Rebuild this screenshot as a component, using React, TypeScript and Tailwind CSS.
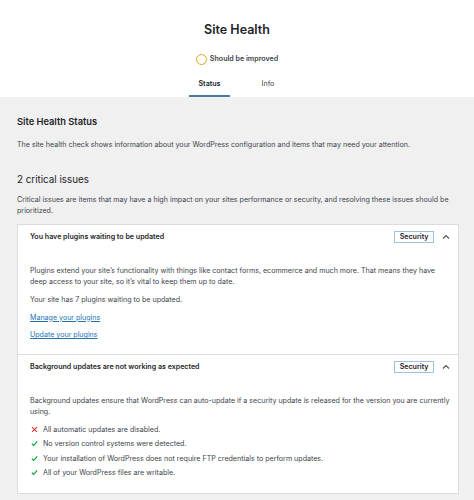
import React from 'react';

const CHECKS = [
  { ok: false, text: 'All automatic updates are disabled.' },
  { ok: true, text: 'No version control systems were detected.' },
  { ok: true, text: 'Your installation of WordPress does not require FTP credentials to perform updates.' },
  { ok: true, text: 'All of your WordPress files are writable.' },
];

function Chevron() {
  return (
    <svg width="8" height="6" viewBox="0 0 8 6" className="shrink-0">
      <path d="M1 4.5 L4 1.5 L7 4.5" fill="none" stroke="#50575e" strokeWidth="1.2" />
    </svg>
  );
}

function IssueHeader({ title }: { title: string }) {
  return (
    <div className="flex items-center h-[25px] pl-[12px] pr-[8px]">
      <span className="flex-1 font-semibold text-[#1d2327]">{title}</span>
      <span className="border border-[#9ec2e6] px-[4.5px] h-[12px] leading-[10px] font-semibold text-[#1d2327] mr-[8px]">
        Security
      </span>
      <Chevron />
    </div>
  );
}

export default function App() {
  return (
    <div className="w-[474px] h-[500px] overflow-hidden bg-[#f0f0f1] text-[7.1px] text-[#3c434a]" style={{ fontFamily: 'Inter, "Noto Sans", sans-serif' }}>
      {/* Header */}
      <div className="bg-white flex flex-col items-center h-[97px]">
        <h1 className="mt-[21px] text-[12.5px] leading-[18px] font-semibold text-[#1d2327]">Site Health</h1>
        <div className="mt-[14.5px] flex items-center gap-[3px]">
          <span className="w-[11px] h-[11px] rounded-full border border-[#dba617]" />
          <span className="font-semibold text-[#3c434a]">Should be improved</span>
        </div>
        <div className="mt-[12.5px] flex h-[20px] ml-[21px]">
          <div className="w-[41px] h-[20px] flex justify-center pt-[0.5px] leading-[11px] border-b-2 border-[#4a7aa6] font-semibold text-[#1d2327]">
            Status
          </div>
          <div className="w-[76px] h-[20px] flex justify-center pt-[0.5px] leading-[11px] text-[#3c434a]">Info</div>
        </div>
      </div>

      {/* Body */}
      <div className="pl-[17px] pr-[15px]">
        <h2 className="mt-[19px] text-[9.3px] leading-[12px] font-semibold text-[#1d2327]">Site Health Status</h2>
        <p className="mt-[11px] leading-[11px]">
          The site health check shows information about your WordPress configuration and items that may need your attention.
        </p>
        <h3 className="mt-[23px] text-[9.8px] leading-[13px] text-[#1d2327]">2 critical issues</h3>
        <p className="mt-[8px] leading-[11px]">
          Critical issues are items that may have a high impact on your sites performance or security, and resolving these issues should be prioritized.
        </p>

        <div className="mt-[7.5px] bg-white border border-[#dcdcde]">
          <IssueHeader title="You have plugins waiting to be updated" />
          <div className="pl-[12px] pr-[10px] pt-[15.5px] pb-[13.5px] flex flex-col gap-[6.8px] leading-[11px]">
            <p>
              Plugins extend your site’s functionality with things like contact forms, ecommerce and much more. That means they have deep access to your site, so it’s vital to keep them up to date.
            </p>
            <p>Your site has 7 plugins waiting to be updated.</p>
            <a href="#" className="text-[#2271b1] underline">Manage your plugins</a>
            <a href="#" className="text-[#2271b1] underline">Update your plugins</a>
          </div>

          <div className="border-t border-[#dcdcde]">
            <IssueHeader title="Background updates are not working as expected" />
            <div className="pl-[12px] pr-[4px] pt-[15px] pb-[14.5px] leading-[11px]">
              <p>
                Background updates ensure that WordPress can auto-update if a security update is released for the version you are currently using.
              </p>
              <ul className="mt-[7.3px] flex flex-col gap-[3.3px]">
                {CHECKS.map((c) => (
                  <li key={c.text} className="flex items-center gap-[5px] pl-[1px]">
                    {c.ok ? (
                      <svg width="7" height="7" viewBox="0 0 8 8" className="shrink-0">
                        <path d="M1 4.3 L3.1 6.3 L7 1.6" fill="none" stroke="#00a32a" strokeWidth="1.3" />
                      </svg>
                    ) : (
                      <svg width="7" height="7" viewBox="0 0 8 8" className="shrink-0">
                        <path d="M1.2 1.2 L6.8 6.8 M6.8 1.2 L1.2 6.8" fill="none" stroke="#d63638" strokeWidth="1.3" />
                      </svg>
                    )}
                    <span>{c.text}</span>
                  </li>
                ))}
              </ul>
            </div>
          </div>
        </div>
      </div>
    </div>
  );
}
